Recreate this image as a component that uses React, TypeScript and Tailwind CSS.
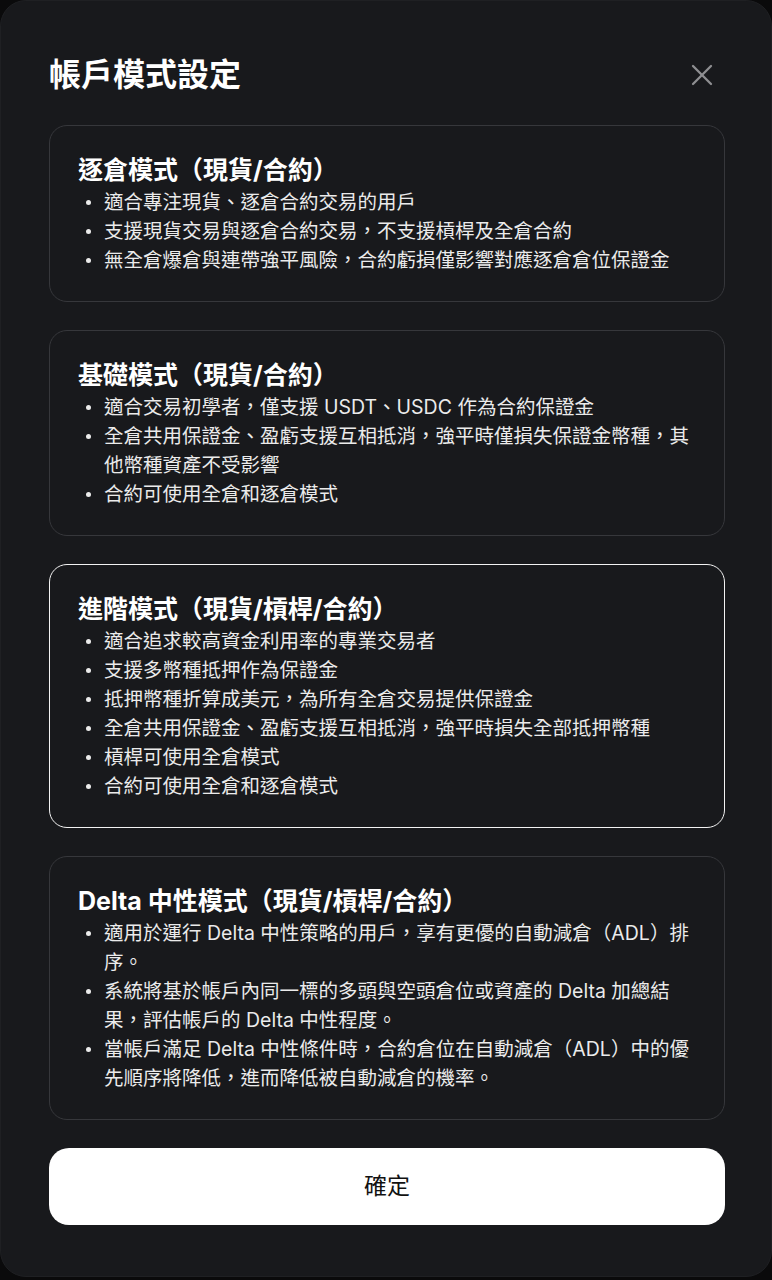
import { X } from "lucide-react";

const modes = [
  {
    title: "逐倉模式（現貨/合約）",
    items: [
      "適合專注現貨、逐倉合約交易的用戶",
      "支援現貨交易與逐倉合約交易，不支援槓桿及全倉合約",
      "無全倉爆倉與連帶強平風險，合約虧損僅影響對應逐倉倉位保證金",
    ],
  },
  {
    title: "基礎模式（現貨/合約）",
    items: [
      "適合交易初學者，僅支援 USDT、USDC 作為合約保證金",
      "全倉共用保證金、盈虧支援互相抵消，強平時僅損失保證金幣種，其他幣種資產不受影響",
      "合約可使用全倉和逐倉模式",
    ],
  },
  {
    title: "進階模式（現貨/槓桿/合約）",
    selected: true,
    items: [
      "適合追求較高資金利用率的專業交易者",
      "支援多幣種抵押作為保證金",
      "抵押幣種折算成美元，為所有全倉交易提供保證金",
      "全倉共用保證金、盈虧支援互相抵消，強平時損失全部抵押幣種",
      "槓桿可使用全倉模式",
      "合約可使用全倉和逐倉模式",
    ],
  },
  {
    title: "Delta 中性模式（現貨/槓桿/合約）",
    items: [
      "適用於運行 Delta 中性策略的用戶，享有更優的自動減倉（ADL）排序。",
      "系統將基於帳戶內同一標的多頭與空頭倉位或資產的 Delta 加總結果，評估帳戶的 Delta 中性程度。",
      "當帳戶滿足 Delta 中性條件時，合約倉位在自動減倉（ADL）中的優先順序將降低，進而降低被自動減倉的機率。",
    ],
  },
];

function ModeCard({ title, items, selected }: { title: string; items: string[]; selected?: boolean }) {
  return (
    <div
      className={`rounded-[18px] border px-7 pb-[26px] pt-7 ${
        selected ? "border-[#f2f2f2]" : "border-[#36373b]"
      }`}
    >
      <h3 className="mb-[2px] text-[25px] font-bold leading-[32px] text-white">{title}</h3>
      <ul>
        {items.map((item) => (
          <li key={item} className="flex text-[19.5px] leading-[29px] text-[#ebebeb]">
            <span className="w-[26px] shrink-0 pl-[8px] pt-[12px]">
              <span className="block h-[5px] w-[5px] rounded-full bg-[#ebebeb]" />
            </span>
            <span>{item}</span>
          </li>
        ))}
      </ul>
    </div>
  );
}

export default function App() {
  return (
    <div
      className="min-h-screen bg-[#0a0a0b]"
      style={{ fontFamily: 'Inter, "Noto Sans CJK TC", sans-serif' }}
    >
      <div className="rounded-[26px] border border-[#1f2023] bg-[#18191c] pb-[51px] pl-12 pr-[46px] pt-[54px]">
        <div className="flex items-center justify-between">
          <h2 className="text-[32px] font-bold leading-[40px] text-white">帳戶模式設定</h2>
          <button className="mr-[5px] text-[#8f8f92]">
            <X size={36} strokeWidth={1.5} />
          </button>
        </div>
        <div className="mt-[30px] flex flex-col gap-7">
          {modes.map((m) => (
            <ModeCard key={m.title} title={m.title} items={m.items} selected={m.selected} />
          ))}
          <button className="h-[77px] w-full rounded-[20px] bg-white text-[23px] text-[#111]">
            確定
          </button>
        </div>
      </div>
    </div>
  );
}
